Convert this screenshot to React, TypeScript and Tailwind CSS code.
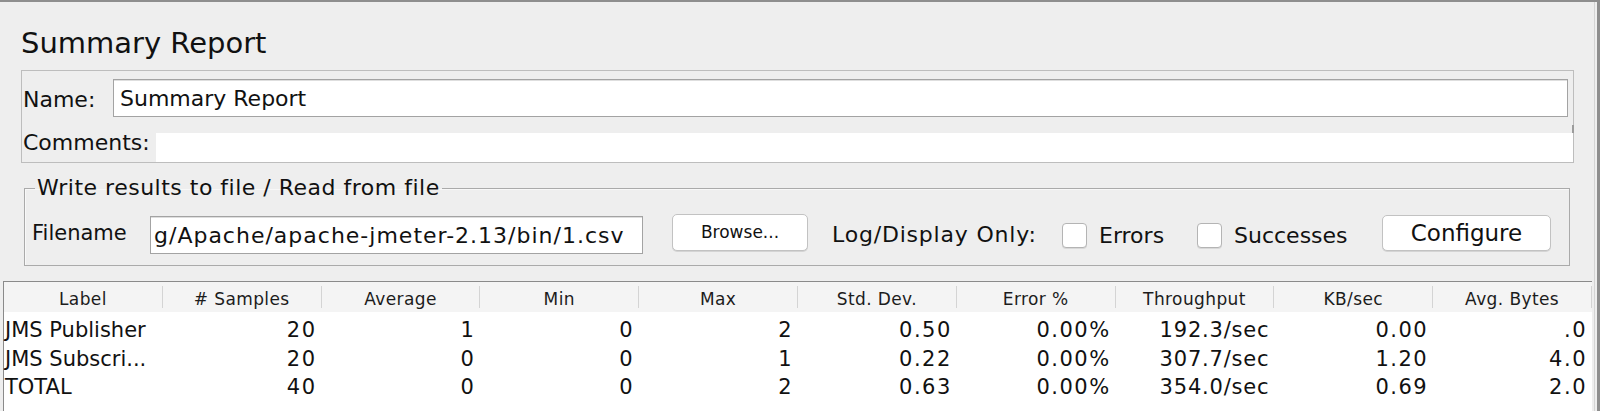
import React from "react";

const font = "font-['DejaVu_Sans',sans-serif]";

const columns = ["Label", "# Samples", "Average", "Min", "Max", "Std. Dev.", "Error %", "Throughput", "KB/sec", "Avg. Bytes"];

const rows = [
  ["JMS Publisher", "20", "1", "0", "2", "0.50", "0.00%", "192.3/sec", "0.00", ".0"],
  ["JMS Subscri...", "20", "0", "0", "1", "0.22", "0.00%", "307.7/sec", "1.20", "4.0"],
  ["TOTAL", "40", "0", "0", "2", "0.63", "0.00%", "354.0/sec", "0.69", "2.0"],
];

const Checkbox = ({ label, width }: { label: string; width: string }) => (
  <div className="mt-[9px] flex h-[25px] items-center">
    <span className="h-[25px] w-[25px] shrink-0 rounded-[4px] border border-[#b4b4b4] bg-white shadow-[0_1px_0_#d8d8d8]" />
    <span className={`ml-[12px] text-[22px] leading-[25px] ${width}`}>{label}</span>
  </div>
);

export default function App() {
  return (
    <div className={`h-[411px] w-full overflow-hidden border-t-2 border-r-[3px] border-[#8e8e8e] bg-[#eeeeee] text-[#111] ${font}`}>
      <div className="mr-[2px] flex h-full flex-col border-r border-[#d4d4d4]">
        {/* title */}
        <div className="pl-[21px] pt-[24px] text-[29px] leading-[34px]">Summary Report</div>

        {/* name / comments */}
        <div className="ml-[21px] mr-[20px] mt-[10px] border border-[#bdbdbd]">
          <div className="flex items-center pt-[8px] pr-[5px]">
            <span className="w-[91px] pl-[1px] pt-[2px] text-[22px]">Name:</span>
            <div className="flex h-[38px] flex-1 items-center border border-[#a3a3a3] bg-white pl-[6px] text-[22px] shadow-[inset_0_1px_0_#dedede]">
              Summary Report
            </div>
          </div>
          <div className="flex h-[16px] items-end justify-end">
            <span className="-mr-px h-[8px] w-[2px] bg-[#9c9c9c]" />
          </div>
          <div className="flex items-start">
            <span className="w-[134px] pl-[1px] text-[22px] leading-[20px]">Comments:</span>
            <div className="h-[29px] flex-1 bg-white" />
          </div>
        </div>

        {/* write results group */}
        <fieldset className="ml-[24px] mr-[24px] mt-[12px] border border-[#aaaaaa] pb-[11px] shadow-[inset_1px_1px_0_#f8f8f8]">
          <legend className="ml-[10px] px-[2px] text-[22px] leading-[26px] tracking-[0.5px]">
            Write results to file / Read from file
          </legend>
          <div className="flex items-start pt-[13px]">
            <span className="mt-[7px] w-[125px] pl-[7px] text-[21px] leading-[25px]">Filename</span>
            <div className="mt-[2px] flex h-[38px] w-[493px] items-center overflow-hidden whitespace-nowrap border border-[#a3a3a3] bg-white pl-[3px] text-[22px] tracking-[1px] shadow-[inset_0_1px_0_#dedede]">
              g/Apache/apache-jmeter-2.13/bin/1.csv
            </div>
            <button className="ml-[29px] flex h-[37px] w-[136px] items-center justify-center rounded-[5px] border border-[#c2c2c2] bg-white text-[17px] shadow-[0_1px_0_#d4d4d4]">
              Browse...
            </button>
            <span className="ml-[24px] mt-[8px] w-[230px] text-[22px] leading-[25px] tracking-[0.8px]">Log/Display Only:</span>
            <Checkbox label="Errors" width="w-[98px]" />
            <Checkbox label="Successes" width="w-[148px]" />
            <button className="mt-[1px] flex h-[36px] w-[169px] items-center justify-center rounded-[5px] border border-[#c2c2c2] bg-white text-[23px] shadow-[0_1px_0_#d4d4d4]">
              Configure
            </button>
          </div>
        </fieldset>

        {/* results table */}
        <div className="ml-[3px] mr-[2px] mt-[15px] flex flex-1 flex-col border-l border-t border-[#8a8a8a] bg-white">
          <div className="grid h-[30px] grid-cols-10 bg-[#f4f4f4]">
            {columns.map((c) => (
              <div key={c} className="flex items-center">
                <span className="flex-1 pt-[4px] text-center text-[17px] leading-[26px] tracking-[0.4px] text-[#1c1c1c]">{c}</span>
                <span className="h-[22px] w-px bg-[#d4d4d4]" />
              </div>
            ))}
          </div>
          <div className="pt-[4px]">
            {rows.map((r) => (
              <div key={r[0]} className="grid h-[28.5px] grid-cols-10 text-[21px] leading-[28.5px]">
                {r.map((v, i) =>
                  i === 0 ? (
                    <span key={i} className="whitespace-nowrap pl-px">{v}</span>
                  ) : v.endsWith("/sec") ? (
                    <span key={i} className="pr-[5px] text-right tracking-[0.8px]">{v}</span>
                  ) : (
                    <span key={i} className="pr-[5px] text-right tracking-[1.5px]">{v}</span>
                  )
                )}
              </div>
            ))}
          </div>
        </div>
      </div>
    </div>
  );
}
